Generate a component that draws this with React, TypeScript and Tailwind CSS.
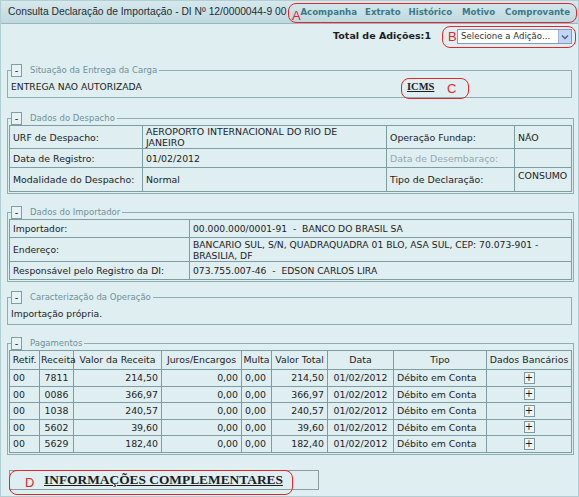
import React from "react";

const SANS = "font-['DejaVu_Sans',sans-serif]";

const despacho = [
  { label: "URF de Despacho:", value: "AEROPORTO INTERNACIONAL DO RIO DE JANEIRO", label2: "Operação Fundap:", value2: "NÃO", h: "h-[22px]" },
  { label: "Data de Registro:", value: "01/02/2012", label2: "Data de Desembaraço:", value2: "", h: "h-[19px]", muted: true },
  { label: "Modalidade do Despacho:", value: "Normal", label2: "Tipo de Declaração:", value2: "CONSUMO", h: "h-[24px]", top: true },
];

const pagamentos = [
  ["00", "7811", "214,50", "0,00", "0,00", "214,50"],
  ["00", "0086", "366,97", "0,00", "0,00", "366,97"],
  ["00", "1038", "240,57", "0,00", "0,00", "240,57"],
  ["00", "5602", "39,60", "0,00", "0,00", "39,60"],
  ["00", "5629", "182,40", "0,00", "0,00", "182,40"],
];

function Section({ title, className, children }: { title: string; className?: string; children: React.ReactNode }) {
  return (
    <fieldset className={`border border-[#8eaeb3] mx-[6px] px-px pb-px ${className ?? ""}`}>
      <legend className="flex items-center ml-[2px] pr-[2px]">
        <span className="flex items-center justify-center w-[11px] h-[13px] border border-[#7f9fa5] bg-[#e6f2f4] text-[10px] leading-none text-[#333]">-</span>
        <span className="ml-[8px] text-[8.5px] text-[#71919a]">{title}</span>
      </legend>
      {children}
    </fieldset>
  );
}

function Mark({ letter, className, letterClass }: { letter: string; className: string; letterClass: string }) {
  return (
    <div className={`absolute border-[1.5px] border-[#e1262d] rounded-[8px] pointer-events-none ${className}`}>
      <span className={`absolute font-['Liberation_Sans',sans-serif] text-[13px] leading-none text-[#e1262d] ${letterClass}`}>{letter}</span>
    </div>
  );
}

export default function App() {
  const td = "border border-[#7d9da3] px-[3px] leading-[11px]";
  return (
    <div className={`relative w-[579px] h-[497px] overflow-hidden bg-[#deeef1] border border-[#b3ced3] text-[#1d1d1d] ${SANS}`}>
      {/* title bar */}
      <div className="flex items-center justify-between h-[23px] pl-[7px] pr-[8px] bg-gradient-to-b from-[#d6e9ed] to-[#bfd8de] border-b border-[#97b8bf]">
        <span className="font-['Liberation_Sans',sans-serif] text-[10.3px] text-[#1e2c30] whitespace-nowrap">
          Consulta Declaração de Importação - DI Nº 12/0000044-9 00
        </span>
        <div className="flex gap-[8px] text-[8.6px] font-bold text-[#3a7a86] whitespace-nowrap">
          <span>Acompanha</span>
          <span>Extrato</span>
          <span>Histórico</span>
          <span className="ml-[2px]">Motivo</span>
          <span className="ml-[2px]">Comprovante</span>
        </div>
      </div>

      <div className="flex items-center justify-end h-[25px] pr-[6px]">
        <span className="text-[9.5px] font-bold mr-[26px]">Total de Adições:1</span>
        <div className="flex items-center w-[115px] h-[15px] bg-white border border-[#7f9db9]">
          <span className="flex-1 pl-[3px] text-[8.6px] text-[#333] whitespace-nowrap overflow-hidden">Selecione a Adição...</span>
          <span className="flex items-center justify-center w-[13px] h-[13px] bg-[#c4d4f5] border-l border-[#9fb4dd]">
            <svg width="8" height="6" viewBox="0 0 8 6"><path d="M1 1.5 L4 4.5 L7 1.5" fill="none" stroke="#4d6185" strokeWidth="1.5" /></svg>
          </span>
        </div>
      </div>

      <Section title="Situação da Entrega da Carga" className="mt-[15px]">
        <div className="flex items-center h-[19px] pl-[2px] text-[9.2px]">
          <span className="w-[396px]">ENTREGA NAO AUTORIZADA</span>
          <span className="font-['Liberation_Serif',serif] font-bold text-[10.5px] underline">ICMS</span>
        </div>
      </Section>

      <Section title="Dados do Despacho" className="mt-[14px]">
        <table className="w-[562px] table-fixed border-collapse text-[9.4px]">
          <colgroup>
            <col className="w-[133px]" />
            <col className="w-[244px]" />
            <col className="w-[128px]" />
            <col className="w-[57px]" />
          </colgroup>
          <tbody>
            {despacho.map((r) => (
              <tr key={r.label} className={r.h}>
                <td className={td}>{r.label}</td>
                <td className={`${td} pr-[30px]`}>{r.value}</td>
                <td className={`${td} ${r.muted ? "text-[#9aa8ab]" : ""}`}>{r.label2}</td>
                <td className={`${td} ${r.top ? "align-top pt-[2px]" : ""}`}>{r.value2}</td>
              </tr>
            ))}
          </tbody>
        </table>
      </Section>

      <Section title="Dados do Importador" className="mt-[12px]">
        <table className="w-[562px] table-fixed border-collapse text-[9.2px]">
          <colgroup>
            <col className="w-[180px]" />
            <col className="w-[382px]" />
          </colgroup>
          <tbody>
            <tr className="h-[18px]">
              <td className={td}>Importador:</td>
              <td className={td}>00.000.000/0001-91 &nbsp;- &nbsp;BANCO DO BRASIL SA</td>
            </tr>
            <tr className="h-[24px]">
              <td className={td}>Endereço:</td>
              <td className={td}>BANCARIO SUL, S/N, QUADRAQUADRA 01 BLO, ASA SUL, CEP: 70.073-901 - BRASILIA, DF</td>
            </tr>
            <tr className="h-[18px]">
              <td className={td}>Responsável pelo Registro da DI:</td>
              <td className={td}>073.755.007-46 &nbsp;- &nbsp;EDSON CARLOS LIRA</td>
            </tr>
          </tbody>
        </table>
      </Section>

      <Section title="Caracterização da Operação" className="mt-[9px]">
        <div className="flex items-center h-[19px] pl-[2px] text-[9.2px]">Importação própria.</div>
      </Section>

      <Section title="Pagamentos" className="mt-[12px]">
        <table className="w-[562px] table-fixed border-collapse text-[9.4px]">
          <colgroup>
            <col className="w-[30px]" />
            <col className="w-[34px]" />
            <col className="w-[88px]" />
            <col className="w-[80px]" />
            <col className="w-[30px]" />
            <col className="w-[56px]" />
            <col className="w-[66px]" />
            <col className="w-[93px]" />
            <col className="w-[85px]" />
          </colgroup>
          <thead>
            <tr className="h-[19px]">
              {["Retif.", "Receita", "Valor da Receita", "Juros/Encargos", "Multa", "Valor Total", "Data", "Tipo", "Dados Bancários"].map((h) => (
                <th key={h} className="border border-[#7d9da3] px-px font-normal text-center whitespace-nowrap">{h}</th>
              ))}
            </tr>
          </thead>
          <tbody>
            {pagamentos.map((r, i) => (
              <tr key={i} className="h-[16.5px]">
                <td className={td}>{r[0]}</td>
                <td className={`${td} text-center`}>{r[1]}</td>
                <td className={`${td} text-right`}>{r[2]}</td>
                <td className={`${td} text-right`}>{r[3]}</td>
                <td className={td}>{r[4]}</td>
                <td className={`${td} text-right`}>{r[5]}</td>
                <td className={`${td} text-center`}>01/02/2012</td>
                <td className={td}>Débito em Conta</td>
                <td className="border border-[#7d9da3]">
                  <div className="mx-auto flex items-center justify-center w-[11px] h-[12px] bg-[#eef5f7] border border-[#7d9aa0] text-[10px] leading-none">+</div>
                </td>
              </tr>
            ))}
          </tbody>
        </table>
      </Section>

      <div className="mt-[15px] ml-[8px] flex items-center w-[310px] h-[20px] border border-[#8d9ea2] pl-[34px]">
        <span className="font-['Liberation_Serif',serif] font-bold text-[13.4px] leading-none underline">INFORMAÇÕES COMPLEMENTARES</span>
      </div>

      {/* annotation marks */}
      <Mark letter="A" className="left-[287px] top-[2px] w-[289px] h-[20px]" letterClass="left-[3px] top-[5px]" />
      <Mark letter="B" className="left-[441px] top-[25px] w-[134px] h-[22px]" letterClass="left-[5px] top-[3px]" />
      <Mark letter="C" className="left-[400px] top-[77px] w-[68px] h-[21px]" letterClass="left-[45px] top-[3px]" />
      <Mark letter="D" className="left-[8px] top-[469px] w-[284px] h-[25px]" letterClass="left-[15px] top-[5px]" />
    </div>
  );
}
